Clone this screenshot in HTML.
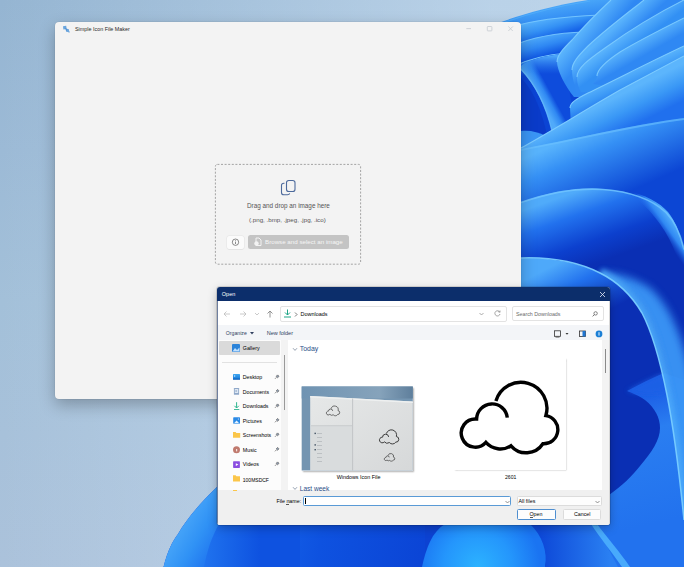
<!DOCTYPE html>
<html><head><meta charset="utf-8">
<style>
*{box-sizing:border-box;margin:0;padding:0}
html,body{width:684px;height:567px;overflow:hidden}
body{position:relative;font-family:"Liberation Sans",sans-serif;background:linear-gradient(to right,rgba(224,240,255,0) 0px,rgba(224,240,255,.49) 490px,rgba(224,240,255,.55) 684px),linear-gradient(to bottom,#95b5d2 0px,#9cbad6 150px,#a3c0d9 300px,#abc2db 567px)}
.a{position:absolute}
.t{position:absolute;white-space:nowrap;line-height:1}
svg.a{overflow:visible}
</style></head><body>
<svg class="a" id="wall" style="left:0;top:0" width="684" height="567" viewBox="0 0 684 567">
<defs>
<linearGradient id="gI_old" gradientUnits="userSpaceOnUse" x1="560" y1="140" x2="650" y2="215"><stop offset="0" stop-color="#4eaafa"/><stop offset="0.45" stop-color="#2a80f1"/><stop offset="1" stop-color="#0b44d2"/></linearGradient>
<linearGradient id="gJ_old" gradientUnits="userSpaceOnUse" x1="545" y1="200" x2="650" y2="265"><stop offset="0" stop-color="#3f9cf8"/><stop offset="0.45" stop-color="#1b68ea"/><stop offset="1" stop-color="#0a33bd"/></linearGradient>
<linearGradient id="gK_old" gradientUnits="userSpaceOnUse" x1="540" y1="262" x2="615" y2="320"><stop offset="0" stop-color="#3e9af7"/><stop offset="0.45" stop-color="#1a62e8"/><stop offset="1" stop-color="#0a2db0"/></linearGradient>
<linearGradient id="gL" gradientUnits="userSpaceOnUse" x1="655" y1="445" x2="640" y2="540"><stop offset="0" stop-color="#3b98f7"/><stop offset="0.25" stop-color="#2274ef"/><stop offset="1" stop-color="#1458e4"/></linearGradient>
<linearGradient id="gBlob" gradientUnits="userSpaceOnUse" x1="175" y1="520" x2="225" y2="550"><stop offset="0" stop-color="#4eabfa"/><stop offset="0.5" stop-color="#3092f5"/><stop offset="1" stop-color="#1a6cee"/></linearGradient>
<linearGradient id="gBot" gradientUnits="userSpaceOnUse" x1="220" y1="530" x2="420" y2="560"><stop offset="0" stop-color="#1a6eef"/><stop offset="0.5" stop-color="#0e52e0"/><stop offset="1" stop-color="#0b45d6"/></linearGradient>
<radialGradient id="gO" gradientUnits="userSpaceOnUse" cx="478" cy="566" r="62"><stop offset="0" stop-color="#2cb2ff"/><stop offset="0.55" stop-color="#2496fc"/><stop offset="1" stop-color="#1a74f2"/></radialGradient>
<linearGradient id="gI" gradientUnits="userSpaceOnUse" x1="570" y1="138" x2="600" y2="205"><stop offset="0" stop-color="#58b3fc"/><stop offset="0.3" stop-color="#3590f5"/><stop offset="1" stop-color="#0c46d4"/></linearGradient>
<linearGradient id="gJ" gradientUnits="userSpaceOnUse" x1="575" y1="192" x2="600" y2="262"><stop offset="0" stop-color="#50abfa"/><stop offset="0.3" stop-color="#2272ee"/><stop offset="0.7" stop-color="#0c40ce"/><stop offset="1" stop-color="#0a2fb4"/></linearGradient>
<linearGradient id="gK" gradientUnits="userSpaceOnUse" x1="560" y1="262" x2="590" y2="320"><stop offset="0" stop-color="#4ea9fa"/><stop offset="0.4" stop-color="#2272ee"/><stop offset="1" stop-color="#0a2fb4"/></linearGradient>
<linearGradient id="gRib" gradientUnits="userSpaceOnUse" x1="652" y1="340" x2="681" y2="331"><stop offset="0" stop-color="#5ab4fc"/><stop offset="0.45" stop-color="#3894f6"/><stop offset="0.8" stop-color="#1f68ea"/><stop offset="1" stop-color="#1a5ae2"/></linearGradient>
<linearGradient id="gP" gradientUnits="userSpaceOnUse" x1="645" y1="385" x2="652" y2="425"><stop offset="0" stop-color="#3088f3"/><stop offset="1" stop-color="#1550e0"/></linearGradient>
<linearGradient id="gQ" gradientUnits="userSpaceOnUse" x1="630" y1="460" x2="660" y2="540"><stop offset="0" stop-color="#2a80f2"/><stop offset="1" stop-color="#2474ef"/></linearGradient>
<linearGradient id="gBlobIn" gradientUnits="userSpaceOnUse" x1="205" y1="540" x2="260" y2="540"><stop offset="0" stop-color="#1f72ee"/><stop offset="1" stop-color="#0e52e0"/></linearGradient>
<linearGradient id="gBR1" gradientUnits="userSpaceOnUse" x1="540" y1="540" x2="610" y2="540"><stop offset="0" stop-color="#0d48d8"/><stop offset="1" stop-color="#2a80f2"/></linearGradient>
<linearGradient id="gBR2" gradientUnits="userSpaceOnUse" x1="620" y1="530" x2="684" y2="560"><stop offset="0" stop-color="#1c66ec"/><stop offset="0.5" stop-color="#2272ef"/><stop offset="1" stop-color="#1a60e8"/></linearGradient>
<linearGradient id="gBand0" gradientUnits="userSpaceOnUse" x1="545" y1="6" x2="548" y2="24"><stop offset="0" stop-color="#4aa8f9"/><stop offset="1" stop-color="#2f88f3"/></linearGradient>
<linearGradient id="gBand1" gradientUnits="userSpaceOnUse" x1="545" y1="19" x2="550" y2="37"><stop offset="0" stop-color="#52aefb"/><stop offset="0.5" stop-color="#3592f5"/><stop offset="1" stop-color="#1766e9"/></linearGradient>
<linearGradient id="gBand2" gradientUnits="userSpaceOnUse" x1="540" y1="36" x2="545" y2="56"><stop offset="0" stop-color="#4eaafa"/><stop offset="0.5" stop-color="#2f88f3"/><stop offset="1" stop-color="#0f56e2"/></linearGradient>
<linearGradient id="gBand3" gradientUnits="userSpaceOnUse" x1="535" y1="57" x2="537" y2="75"><stop offset="0" stop-color="#45a2f8"/><stop offset="0.4" stop-color="#2474ef"/><stop offset="1" stop-color="#0b44d4"/></linearGradient>
<linearGradient id="gFold" gradientUnits="userSpaceOnUse" x1="538" y1="95" x2="549" y2="89"><stop offset="0" stop-color="#50aafa"/><stop offset="0.55" stop-color="#3089f3"/><stop offset="1" stop-color="#0e4cdc"/></linearGradient>
<linearGradient id="gD1" gradientUnits="userSpaceOnUse" x1="580" y1="32" x2="596" y2="46"><stop offset="0" stop-color="#5ab4fc"/><stop offset="1" stop-color="#2f88f3"/></linearGradient>
<linearGradient id="gD2" gradientUnits="userSpaceOnUse" x1="600" y1="40" x2="611" y2="52"><stop offset="0" stop-color="#58b2fc"/><stop offset="1" stop-color="#3089f3"/></linearGradient>
<linearGradient id="gD3" gradientUnits="userSpaceOnUse" x1="610" y1="46" x2="619" y2="58"><stop offset="0" stop-color="#58b2fc"/><stop offset="1" stop-color="#3290f4"/></linearGradient>
<linearGradient id="gD4" gradientUnits="userSpaceOnUse" x1="625" y1="48" x2="633" y2="62"><stop offset="0" stop-color="#5ab4fc"/><stop offset="1" stop-color="#2f88f3"/></linearGradient>
<linearGradient id="gD5" gradientUnits="userSpaceOnUse" x1="630" y1="70" x2="640" y2="92"><stop offset="0" stop-color="#5ab4fc"/><stop offset="0.5" stop-color="#3b98f6"/><stop offset="1" stop-color="#1e6eed"/></linearGradient>
<linearGradient id="gH" gradientUnits="userSpaceOnUse" x1="590" y1="110" x2="605" y2="140"><stop offset="0" stop-color="#5cb5fc"/><stop offset="0.5" stop-color="#3a98f6"/><stop offset="1" stop-color="#2070ee"/></linearGradient>
<linearGradient id="gJR" gradientUnits="userSpaceOnUse" x1="678" y1="228" x2="664" y2="238"><stop offset="0" stop-color="#52aefb"/><stop offset="0.5" stop-color="#3088f3"/><stop offset="1" stop-color="#1a5ee6" stop-opacity="0"/></linearGradient>
<linearGradient id="gFoldTop" gradientUnits="userSpaceOnUse" x1="0" y1="56" x2="0" y2="74"><stop offset="0" stop-color="#4ca6f9"/><stop offset="1" stop-color="#2a7ff0" stop-opacity="0"/></linearGradient>
<filter id="fb6" x="-50%" y="-50%" width="200%" height="200%"><feGaussianBlur stdDeviation="6"/></filter>
<filter id="fb2" x="-50%" y="-50%" width="200%" height="200%"><feGaussianBlur stdDeviation="2.5"/></filter>
<linearGradient id="gPQ" gradientUnits="userSpaceOnUse" x1="640" y1="390" x2="670" y2="520"><stop offset="0" stop-color="#1a5ae4"/><stop offset="0.3" stop-color="#2a7ef1"/><stop offset="1" stop-color="#2272ee"/></linearGradient>
<filter id="fb4" x="-50%" y="-50%" width="200%" height="200%"><feGaussianBlur stdDeviation="4"/></filter>
</defs>
<!-- base -->
<path d="M504,25 C524,17.5 554,8.5 594,2 L684,2 L684,567 L163.5,567 C168,550 172,542 178,534 C186,520 200,503 217,487 L505,300 Z" fill="#0c42d2"/>
<!-- top bands -->
<path d="M500,22.5 C520,15 550,6 588,0 L684,0 L684,140 L505,140 Z" fill="url(#gBand0)"/>
<path d="M500,24 C520,16.5 550,7.5 590,1" fill="none" stroke="#5cb8fd" stroke-width="1.2" opacity="0.5"/>
<path d="M512,27 C530,21 555,17 600,15 L620,140 L512,140 Z" fill="url(#gBand1)"/>
<path d="M512,46 C528,39 550,33 585,32 L620,140 L512,140 Z" fill="url(#gBand2)"/>
<path d="M512,67 C526,60 542,55 568,53 L620,140 L512,140 Z" fill="url(#gBand3)"/>
<g fill="none" stroke="#78c8ff" stroke-width="1.1" opacity="0.9">
<path d="M512,27 C530,21 555,17 600,15"/><path d="M512,46 C528,39 550,33 585,32"/><path d="M512,67 C526,60 542,55 568,53"/>
</g>
<!-- dark lower-left region -->
<path d="M512,70 C528,82 540,100 548,140 L512,140 Z" fill="#0a3bc9"/>
<!-- fold F -->
<path d="M521,66 C530,59 545,56 562,54 L576,125 L552,131 C546,106 535,85 521,70 Z" fill="url(#gFold)"/>
<path d="M521,66 C530,59 545,56 562,54 L566,75 L521,75 Z" fill="url(#gFoldTop)"/>
<path d="M521,69 C536,85 546,106 552,131" fill="none" stroke="#66bcfd" stroke-width="1.2" opacity="0.8"/>
<!-- diagonal petals -->
<path d="M611,0 C598,12 585,25 572,40 C564,48 557,55 557,62 C557,70 565,86 574,97 L684,97 L684,0 Z" fill="url(#gD1)"/>
<path d="M644,0 C625,15 605,30 588,46 C578,56 572,63 572,70 C572,78 575,86 577,93 L684,97 L684,0 Z" fill="url(#gD2)"/>
<path d="M684,0 C660,12 630,30 605,48 C588,60 577,68 577,77 C577,84 579,88 581,92 L684,97 Z" fill="url(#gD3)"/>
<path d="M684,18 C668,26 640,40 620,52 C605,62 597,70 597,76 C597,80 594,82 593,84 L684,97 Z" fill="url(#gD4)"/>
<g fill="none" stroke="#7ccbff" stroke-width="1.1" opacity="0.95">
<path d="M611,0 C598,12 585,25 572,40 C564,48 557,55 557,62"/>
<path d="M644,0 C625,15 605,30 588,46 C578,56 572,63 572,70"/>
<path d="M684,0 C660,12 630,30 605,48 C588,60 577,68 577,77"/>
<path d="M684,18 C668,26 640,40 620,52 C605,62 597,70 597,76"/>
</g>
<path d="M684,46 C650,62 615,80 588,93 C576,99 570,103 570,108 L571,125 L684,125 Z" fill="url(#gD5)"/>
<path d="M684,46 C650,62 615,80 588,93 C576,99 570,103 570,108" fill="none" stroke="#7ccbff" stroke-width="1.1"/>
<!-- small petal G -->
<path d="M521,131 C530,130 538,132 546,136 L556,150 L521,150 Z" fill="#3a96f6"/>
<!-- petal H -->
<path d="M521,148 C550,132 585,110 620,90 L684,56 L684,160 L521,160 Z" fill="url(#gH)"/>
<path d="M521,148 C550,132 585,110 620,90 L684,56" fill="none" stroke="#7ccbff" stroke-width="1.1"/>
<!-- petal I -->
<path d="M521,149 C580,138 630,125 684,118 L684,250 L521,250 Z" fill="url(#gI)"/>
<path d="M521,150 C580,139 630,126 684,119" fill="none" stroke="#6cc2ff" stroke-width="2" opacity="0.6"/>
<!-- petal J -->
<path d="M521,202 C550,192 575,187 603,189 C630,191 652,199 666,212 C676,222 681,236 684,249 L684,567 L521,567 Z" fill="url(#gJ)"/>
<path d="M625,191 C645,194 660,203 668,212 C676,222 681,236 684,249 L684,285 C680,262 672,240 660,224 C650,210 640,200 625,191 Z" fill="url(#gJR)"/>
<path d="M521,202.5 C550,192.5 575,187.5 603,189.5 C630,191.5 652,199.5 666,212.5 C676,222.5 681,236.5 684,249.5" fill="none" stroke="#72c6ff" stroke-width="1.6" opacity="0.8"/>
<!-- petal K -->
<path d="M521,258 C550,257 578,262 600,273 C618,282 632,296 642,313 C652,332 660,360 667,395 C673,425 679,470 684,520 L684,567 L521,567 Z" fill="url(#gK)"/>
<!-- petal P+Q -->
<path d="M627,391 C640,384 652,378 664,373 L684,380 L684,567 L597,567 L597,524 L609,495 C622,486 632,476 640,466 C652,452 660,440 660,428 C660,418 655,408 645,400 C638,395 632,393 627,391 Z" fill="url(#gPQ)"/>
<path d="M627,391 C640,384 652,378 664,373 L666,392 C655,395 640,395 627,391 Z" fill="#1e62e6" filter="url(#fb2)" opacity="0.8"/>
<clipPath id="cRib"><path d="M521,258 C550,257 578,262 600,273 C618,282 632,296 642,313 C652,332 660,360 667,395 C673,425 679,470 684,520 L684,567 L700,567 L700,150 L521,150 Z"/></clipPath>
<g clip-path="url(#cRib)" fill="none">
<path d="M600,273 C618,282 632,296 642,313 C652,332 660,360 667,395 C673,425 679,470 684,520 L704,540 C704,470 698,420 692,380 C684,340 670,305 650,288 C635,278 615,272 600,273 Z" fill="#3b96f6" filter="url(#fb4)" opacity="0.95"/>
<path d="M600,273 C618,282 632,296 642,313 C652,332 660,360 667,395 C673,425 679,470 684,520 L690,600" stroke="#4eaafa" stroke-width="10" filter="url(#fb2)" opacity="0.9"/>
</g>
<path d="M521,258 C550,257 578,262 600,273 C618,282 632,296 642,313 C652,332 660,360 667,395 C673,425 679,470 684,520" fill="none" stroke="#78ccff" stroke-width="1.5" opacity="0.95"/>
<!-- bottom-right light petals -->
<!-- bottom -->
<path d="M218,500 L425,500 L425,567 L218,567 Z" fill="url(#gBot)"/>
<!-- blob N -->
<path d="M163.5,567 C168,550 172,542 178,534 C186,520 200,503 217,487 L230,478 L300,478 L300,567 Z" fill="url(#gBlob)"/>
<path d="M236,505 C222,515 210,535 204,567 L300,567 L300,505 Z" fill="url(#gBlobIn)"/>
<!-- petal O -->
<path d="M422,567 C426,548 432,532 445,524 L535,524 C545,540 548,555 545,567 Z" fill="url(#gO)"/>
<path d="M530,524 L595,524 C603,540 612,555 618,567 L545,567 C548,552 542,535 530,524 Z" fill="url(#gBR1)"/>
<path d="M591,524 C600,538 612,552 622,567 L630,567 C620,552 606,536 597,524 Z" fill="#4db0fd" opacity="0.9"/>

</svg>

<!-- ===== App window ===== -->
<div class="a" style="left:55px;top:22px;width:466px;height:377px;background:#f3f3f3;border-radius:4px;box-shadow:0 0 0 0.5px rgba(0,0,0,.08),0 6px 16px rgba(0,0,0,.26)"></div>
<svg class="a" style="left:62px;top:25px" width="9" height="9" viewBox="0 0 9 9">
  <path d="M1,1.2 L4.2,0.8 L4.6,4 L1.4,4.4 Z" fill="#6aa6de"/><path d="M3.2,3.2 L6.6,4.2 L7.6,7.6 L4.2,6.6 Z" fill="#3f86d0"/><path d="M4.6,4 L6.6,4.2 L7.6,7.6 L4.2,6.6 Z" fill="#8bbde8" opacity=".6"/>
</svg>
<div class="t" style="left:75px;top:27.2px;font-size:5.4px;color:#2a2a2a">Simple Icon File Maker</div>
<svg class="a" style="left:0;top:0" width="684" height="567" viewBox="0 0 684 567"><g fill="none" stroke="#c3c8cf" stroke-width="0.75"><path d="M466.3,28.6 L471,28.6"/><rect x="487.3" y="26.5" width="4.6" height="4.4" rx="0.6"/><path d="M508.3,26.5 L512.8,31 M512.8,26.5 L508.3,31"/></g></svg>



<!-- dashed drop area -->
<svg class="a" style="left:0;top:0" width="684" height="567" viewBox="0 0 684 567"><rect x="215.4" y="164.4" width="145.2" height="99.8" rx="2" fill="none" stroke="#8f8f8f" stroke-width="0.8" stroke-dasharray="2 1.6"/></svg>
<svg class="a" style="left:280px;top:179px" width="16" height="17" viewBox="0 0 16 17">
  <rect x="6.5" y="1.5" width="8.5" height="11" rx="2.3" fill="none" stroke="#4d6a9c" stroke-width="1.1"/>
  <path d="M4.5,4.3 L3.8,4.3 Q1.5,4.3 1.5,6.6 L1.5,13.5 Q1.5,15.8 3.8,15.8 L7.5,15.8 Q9.3,15.8 9.7,14.4" fill="none" stroke="#4d6a9c" stroke-width="1.1"/>
</svg>
<div class="t" style="left:247px;top:202.5px;font-size:6.35px;color:#555">Drag and drop an image here</div>
<div class="t" style="left:249px;top:216.5px;font-size:6.2px;color:#555">(.png, .bmp, .jpeg, .jpg, .ico)</div>
<div class="a" style="left:227px;top:236px;width:17px;height:13px;background:#fbfbfb;border-radius:2px;box-shadow:0 0 0 0.5px #e3e3e3,0 0.5px 0 #d8d8d8"></div>
<svg class="a" style="left:231px;top:237.5px" width="9" height="9" viewBox="0 0 9 9"><circle cx="4.5" cy="4.2" r="3.2" fill="none" stroke="#5a5a5a" stroke-width="0.7"/><path d="M4.5,3.6 L4.5,6" stroke="#5a5a5a" stroke-width="0.7"/><circle cx="4.5" cy="2.5" r="0.45" fill="#5a5a5a"/></svg>
<div class="a" style="left:248px;top:235px;width:101px;height:14px;background:#c4c4c4;border-radius:2.5px"></div>
<svg class="a" style="left:253px;top:237px" width="10" height="10" viewBox="0 0 10 10"><path d="M3,1 L6,1 L8,3 L8,8.5 L3,8.5 Z" fill="none" stroke="#f3f3f3" stroke-width="1"/><circle cx="3.5" cy="6.5" r="2.2" fill="#f3f3f3"/></svg>
<div class="t" style="left:265px;top:238.5px;font-size:6.2px;color:#f6f6f6">Browse and select an image</div>

<!-- ===== Open dialog ===== -->
<div class="a" style="left:217px;top:287.4px;width:392.6px;height:238.1px;background:#f0f0f0;border-radius:3px;box-shadow:0 0 0 1px rgba(0,0,0,.12),0 3px 10px rgba(0,0,0,.25);overflow:hidden">
  <div class="a" style="left:0;top:0;width:393px;height:14px;background:#0c2e6b"></div>
  <div class="a" style="left:0;top:13.5px;width:1px;height:225px;background:#6f7f9f"></div>
  <div class="a" style="left:391.6px;top:13.5px;width:1px;height:225px;background:#d8d8d8"></div>
  <div class="a" style="left:1px;top:13.5px;width:390.6px;height:25px;background:#ffffff"></div>
  <div class="a" style="left:1px;top:38px;width:390.6px;height:15px;background:#f3f5f8"></div>
  <div class="a" style="left:1px;top:53px;width:63px;height:150px;background:#fcfcfc"></div>
  <div class="a" style="left:64px;top:53px;width:7px;height:150px;background:#f3f3f3"></div>
  <div class="a" style="left:71px;top:53px;width:314px;height:150px;background:#ffffff"></div>
  <div class="a" style="left:385px;top:53px;width:6.6px;height:150px;background:#f3f3f3"></div>
  <div class="a" style="left:1px;top:203px;width:390.6px;height:35px;background:#f0f0f0"></div>
</div>
<div class="t" style="left:221.8px;top:291.8px;font-size:5.5px;color:#fff">Open</div>
<svg class="a" style="left:600px;top:291.5px" width="5" height="5" viewBox="0 0 5 5"><path d="M0,0 L5,5 M5,0 L0,5" stroke="#e8eef8" stroke-width="0.8"/></svg>

<!-- nav -->
<svg class="a" style="left:223px;top:310px" width="54" height="8" viewBox="0 0 54 8">
  <path d="M1,4 L7,4 M3.5,1.5 L1,4 L3.5,6.5" fill="none" stroke="#bdbdbd" stroke-width="0.8"/>
  <path d="M17,4 L23,4 M20.5,1.5 L23,4 L20.5,6.5" fill="none" stroke="#bdbdbd" stroke-width="0.8"/>
  <path d="M32,3 L34,5 L36,3" fill="none" stroke="#bdbdbd" stroke-width="0.8"/>
  <path d="M47,7.5 L47,1 M44.5,3.5 L47,1 L49.5,3.5" fill="none" stroke="#888" stroke-width="0.9"/>
</svg>
<div class="a" style="left:280px;top:306px;width:226.8px;height:15.5px;background:#fff;border:1px solid #e3e3e3;border-radius:2px"></div>
<svg class="a" style="left:283px;top:309px" width="9" height="9" viewBox="0 0 9 9"><path d="M4.5,0.5 L4.5,6 M2,3.5 L4.5,6 L7,3.5 M1,8 L8,8" fill="none" stroke="#1fa587" stroke-width="1"/></svg>
<svg class="a" style="left:294px;top:311.5px" width="4" height="5" viewBox="0 0 4 5"><path d="M1,0.5 L3,2.5 L1,4.5" fill="none" stroke="#444" stroke-width="0.7"/></svg>
<div class="t" style="left:300.5px;top:311.6px;font-size:5.46px;color:#000">Downloads</div>
<svg class="a" style="left:479px;top:312px" width="5" height="4" viewBox="0 0 5 4"><path d="M0.5,1 L2.5,3 L4.5,1" fill="none" stroke="#888" stroke-width="0.7"/></svg>
<svg class="a" style="left:494px;top:310px" width="7" height="7" viewBox="0 0 7 7"><path d="M5.8,2.2 A2.6,2.6 0 1 0 6,4" fill="none" stroke="#888" stroke-width="0.75"/><path d="M4.3,1.8 L6,2.2 L6,0.5" fill="none" stroke="#888" stroke-width="0.7"/></svg>
<div class="a" style="left:512.2px;top:306.3px;width:91.4px;height:15.2px;background:#fff;border:1px solid #e3e3e3;border-radius:2px"></div>
<div class="t" style="left:516px;top:311.8px;font-size:5.3px;color:#6a6a6a">Search Downloads</div>
<svg class="a" style="left:592px;top:310.5px" width="6" height="6" viewBox="0 0 6 6"><circle cx="3.6" cy="2.4" r="1.7" fill="none" stroke="#555" stroke-width="0.7"/><path d="M2.4,3.6 L0.6,5.4" stroke="#555" stroke-width="0.8"/></svg>

<!-- toolbar -->
<div class="t" style="left:225.8px;top:331.2px;font-size:5.2px;color:#2f3f5f">Organize</div>
<svg class="a" style="left:250px;top:332px" width="4" height="3" viewBox="0 0 4 3"><path d="M0,0 L4,0 L2,2.5 Z" fill="#2f3f5f"/></svg>
<div class="t" style="left:266.7px;top:331.2px;font-size:5.5px;color:#2f3f5f">New folder</div>
<svg class="a" style="left:554px;top:329.7px" width="50" height="8" viewBox="0 0 50 8">
  <rect x="0.5" y="0.8" width="6" height="5.5" fill="none" stroke="#333" stroke-width="0.8"/><path d="M1.5,7.2 L5.5,7.2" stroke="#333" stroke-width="0.6"/>
  <path d="M11.5,3 L14.5,3 L13,4.8 Z" fill="#333"/>
  <rect x="25.5" y="1" width="6" height="5.5" fill="none" stroke="#333" stroke-width="0.8"/><rect x="28.5" y="1" width="3" height="5.5" fill="#1e74d0"/>
  <circle cx="45" cy="3.9" r="3.4" fill="#1a7fd6"/><path d="M45,2.2 L45,5.6" stroke="#fff" stroke-width="0.9"/>
</svg>

<!-- sidebar -->
<div class="a" style="left:219px;top:341px;width:61px;height:14px;background:#dadada;border-radius:1px"></div>
<svg class="a" style="left:232px;top:344px" width="8" height="8" viewBox="0 0 8 8"><rect x="0" y="0" width="8" height="8" rx="1" fill="#2b83d9"/><path d="M0.5,7.5 L3,4 L5,6 L7.5,3.5 L7.5,7.5 Z" fill="#bfe0ff"/></svg>
<div class="t" style="left:242.8px;top:346.4px;font-size:5.3px;color:#000">Gallery</div>
<div class="a" style="left:222px;top:362px;width:55px;height:1px;background:#e2e2e2"></div>
<div class="a" style="left:284px;top:355px;width:1px;height:55px;background:#9a9a9a"></div>

<svg class="a" style="left:0;top:0" width="684" height="567" viewBox="0 0 684 567">
  <!-- Desktop -->
  <defs><linearGradient id="gDesk" x1="0" y1="0" x2="0" y2="1"><stop offset="0" stop-color="#3fa6f0"/><stop offset="1" stop-color="#1478d8"/></linearGradient></defs>
  <rect x="233" y="374" width="7" height="5.6" rx="0.5" fill="url(#gDesk)"/><rect x="233" y="378.6" width="7" height="1" fill="#0f5fb8"/><rect x="234" y="375" width="1.2" height="2" fill="#bfe3ff" opacity=".7"/>
  <!-- Documents -->
  <rect x="233.9" y="388" width="5.2" height="6.7" rx="0.5" fill="#8fa8c9"/><rect x="234.8" y="389" width="3.4" height="4" fill="#dfe8f3"/><rect x="235.6" y="390" width="1" height="2" fill="#8fa8c9"/>
  <!-- Downloads -->
  <path d="M236.6,402.2 L236.6,408 M234.4,405.8 L236.6,408 L238.8,405.8" fill="none" stroke="#2fb58f" stroke-width="1"/><rect x="234" y="409" width="5.3" height="0.9" fill="#2fb58f"/>
  <!-- Pictures -->
  <rect x="233.2" y="417.3" width="6.8" height="6.4" rx="0.6" fill="#2a8ae6"/><path d="M234,423.2 L236.6,420.6 L239.2,423.2 Z" fill="#e6f3ff"/><circle cx="238.4" cy="419" r="0.6" fill="#e6f3ff"/>
  <!-- Screenshots folder -->
  <path d="M233,432 L235.6,432 L236.4,432.9 L240.2,432.9 L240.2,437.8 L233,437.8 Z" fill="#fbc64a"/>
  <!-- Music -->
  <circle cx="236.5" cy="449.7" r="3.5" fill="#c07a6e"/><rect x="236" y="449" width="1.2" height="2.4" fill="#f5e3de"/>
  <!-- Videos -->
  <rect x="233.1" y="461.2" width="6.8" height="6.7" rx="0.6" fill="#8b4ee0"/><path d="M235.8,463.2 L238.4,464.6 L235.8,466 Z" fill="#fff"/>
  <!-- 100MSDCF folder -->
  <path d="M233,475.3 L235.6,475.3 L236.4,476.2 L240,476.2 L240,481.6 L233,481.6 Z" fill="#fbc64a"/>
  <rect x="233" y="490" width="4" height="1.2" fill="#fbc64a"/>
  <!-- pins -->
  <g stroke="#7a7a7a" stroke-width="0.9" fill="#8a9ab0">
    <path d="M275,378.8 L276.5,377.3"/><path d="M276.2,376.3 L277.6,374.9 L279,376.3 L277.6,377.7 Z"/>
    <path d="M275,393.3 L276.5,391.8"/><path d="M276.2,390.8 L277.6,389.4 L279,390.8 L277.6,392.2 Z"/>
    <path d="M275,407.8 L276.5,406.3"/><path d="M276.2,405.3 L277.6,403.9 L279,405.3 L277.6,406.7 Z"/>
    <path d="M275,422.3 L276.5,420.8"/><path d="M276.2,419.8 L277.6,418.4 L279,419.8 L277.6,421.2 Z"/>
    <path d="M275,436.8 L276.5,435.3"/><path d="M276.2,434.3 L277.6,432.9 L279,434.3 L277.6,435.7 Z"/>
    <path d="M275,451.3 L276.5,449.8"/><path d="M276.2,448.8 L277.6,447.4 L279,448.8 L277.6,450.2 Z"/>
    <path d="M275,465.8 L276.5,464.3"/><path d="M276.2,463.3 L277.6,461.9 L279,463.3 L277.6,464.7 Z"/>
  </g>
</svg>
<div class="t" style="left:242.8px;top:375.2px;font-size:5.3px;color:#000">Desktop</div>
<div class="t" style="left:242.8px;top:389.7px;font-size:5.2px;color:#000">Documents</div>
<div class="t" style="left:242.8px;top:404.2px;font-size:5.2px;color:#000">Downloads</div>
<div class="t" style="left:242.8px;top:418.7px;font-size:5.3px;color:#000">Pictures</div>
<div class="t" style="left:242.8px;top:433.2px;font-size:5.1px;color:#000">Screenshots</div>
<div class="t" style="left:242.8px;top:447.7px;font-size:5.3px;color:#000">Music</div>
<div class="t" style="left:242.8px;top:462.2px;font-size:5.3px;color:#000">Videos</div>
<div class="t" style="left:242.8px;top:477.6px;font-size:5.0px;color:#000">100MSDCF</div>


<!-- content -->
<svg class="a" style="left:292px;top:346.5px" width="6" height="5" viewBox="0 0 6 5"><path d="M1,1.2 L3,3.4 L5,1.2" fill="none" stroke="#6a7a90" stroke-width="0.7"/></svg>
<div class="t" style="left:299.8px;top:346px;font-size:6.9px;color:#2b4f88">Today</div>

<div class="a" style="left:301.7px;top:386.5px;width:111.1px;height:84px;box-shadow:1px 1px 1.5px rgba(0,0,0,.3)"></div>
<svg class="a" style="left:0;top:0" width="684" height="567" viewBox="0 0 684 567">
  <defs><linearGradient id="gScr" x1="0" y1="0" x2="1" y2="1"><stop offset="0" stop-color="#e6e8e8"/><stop offset="1" stop-color="#d6d8d9"/></linearGradient></defs>
  <defs><linearGradient id="gPhTop" x1="0" y1="0" x2="1" y2="0"><stop offset="0" stop-color="#6f93b2"/><stop offset="0.7" stop-color="#86a3bb"/><stop offset="1" stop-color="#5f7f9c"/></linearGradient></defs>
  <rect x="301.7" y="386.5" width="111.1" height="84" fill="#7495b1"/>
  <rect x="301.7" y="386.5" width="111.1" height="12" fill="url(#gPhTop)"/>
  <path d="M310.2,395.9 L412.8,401.5 L412.8,470.5 L310.2,470.5 Z" fill="url(#gScr)"/>
  <path d="M310.2,395.9 L412.8,401.5 L412.8,403 L310.2,397.5 Z" fill="#eef0f0"/>
  <path d="M495.9,401 A25.5,25.5 0 1 1 545.9,415.6 A14.2,14.2 0 0 1 542.9,443.8 A20,20 0 0 1 511,445.8 A19.4,19.4 0 0 1 485.9,442.4 A14.1,14.1 0 1 1 476.6,419 A15.4,15.4 0 0 1 507.3,417.6" transform="translate(378.9,429.8) scale(0.2) translate(-458.5,-382)" fill="none" stroke="#2a2a2a" stroke-width="4.5"/>
  <path d="M495.9,401 A25.5,25.5 0 1 1 545.9,415.6 A14.2,14.2 0 0 1 542.9,443.8 A20,20 0 0 1 511,445.8 A19.4,19.4 0 0 1 485.9,442.4 A14.1,14.1 0 1 1 476.6,419 A15.4,15.4 0 0 1 507.3,417.6" transform="translate(384,453.5) scale(0.108374) translate(-458.5,-382)" fill="none" stroke="#3a3a3a" stroke-width="6.45909"/>
  <path d="M495.9,401 A25.5,25.5 0 1 1 545.9,415.6 A14.2,14.2 0 0 1 542.9,443.8 A20,20 0 0 1 511,445.8 A19.4,19.4 0 0 1 485.9,442.4 A14.1,14.1 0 1 1 476.6,419 A15.4,15.4 0 0 1 507.3,417.6" transform="translate(326,406) scale(0.137931) translate(-458.5,-382)" fill="none" stroke="#3a3a3a" stroke-width="5.075"/>
  <rect x="352.3" y="398.5" width="0.8" height="72" fill="#b9bdbf"/>
  <rect x="311" y="426" width="41" height="44" fill="#d9dcdd"/>
  <rect x="311" y="425.5" width="41" height="0.6" fill="#b9bdbf"/>
  <g fill="#3f4f60"><rect x="314.5" y="432.7" width="1.4" height="1.4"/><rect x="314.5" y="444.2" width="1.4" height="1.4"/><rect x="314.5" y="449" width="1.4" height="1.4"/></g>
  <g fill="#b5babd"><rect x="317" y="433" width="5" height="0.8"/><rect x="317" y="437" width="5" height="0.8"/><rect x="317" y="441" width="5" height="0.8"/><rect x="317" y="445" width="5" height="0.8"/><rect x="317" y="449" width="5" height="0.8"/><rect x="317" y="453" width="5" height="0.8"/><rect x="317" y="457" width="5" height="0.8"/><rect x="317" y="461" width="5" height="0.8"/></g>
</svg>

<div class="a" style="left:454px;top:358.3px;width:111.6px;height:112px;background:#fff;box-shadow:0.5px 0.5px 1.5px rgba(0,0,0,.3)"></div>
<svg class="a" style="left:454px;top:358px" width="112" height="112" viewBox="454 358 112 112">
  <path d="M495.9,401 A25.5,25.5 0 1 1 545.9,415.6 A14.2,14.2 0 0 1 542.9,443.8 A20,20 0 0 1 511,445.8 A19.4,19.4 0 0 1 485.9,442.4 A14.1,14.1 0 1 1 476.6,419 A15.4,15.4 0 0 1 507.3,417.6" fill="none" stroke="#000" stroke-width="3.4" stroke-linejoin="miter"/>
</svg>
<div class="t" style="left:336.7px;top:475px;font-size:5.4px;color:#000">Windows Icon File</div>
<div class="t" style="left:505px;top:475px;font-size:5.1px;color:#000">2601</div>
<svg class="a" style="left:292px;top:485.5px" width="6" height="5" viewBox="0 0 6 5"><path d="M1,1.2 L3,3.4 L5,1.2" fill="none" stroke="#6a7a90" stroke-width="0.7"/></svg>
<div class="t" style="left:299.8px;top:485.5px;font-size:6.55px;color:#2b4f88">Last week</div>
<div class="a" style="left:605px;top:348.5px;width:1px;height:24px;background:#8a8a8a"></div>

<!-- footer -->
<div class="a" style="left:218px;top:491px;width:390.6px;height:34px;background:#f0f0f0;border-radius:0 0 3px 3px"></div>
<div class="t" style="left:276.4px;top:499px;font-size:5.3px;color:#000">File name:</div>
<div class="a" style="left:286.4px;top:504px;width:2.8px;height:0.5px;background:#555"></div>
<div class="a" style="left:303px;top:496px;width:208px;height:10px;background:#fff;border:1px solid #5a9ad6;border-radius:1.5px"></div>
<div class="a" style="left:305px;top:498px;width:0.7px;height:6px;background:#000"></div>
<svg class="a" style="left:504.5px;top:499.5px" width="5" height="4" viewBox="0 0 5 4"><path d="M0.5,1 L2.5,3 L4.5,1" fill="none" stroke="#666" stroke-width="0.7"/></svg>
<div class="a" style="left:516.5px;top:496px;width:85px;height:9.5px;background:#fdfdfd;border:1px solid #dcdcdc;border-radius:1.5px"></div>
<div class="t" style="left:518.5px;top:498.8px;font-size:5.3px;color:#000">All files</div>
<svg class="a" style="left:594.5px;top:499.5px" width="5" height="4" viewBox="0 0 5 4"><path d="M0.5,1 L2.5,3 L4.5,1" fill="none" stroke="#666" stroke-width="0.7"/></svg>
<div class="a" style="left:517px;top:509px;width:38.6px;height:10.5px;background:#fdfdfd;border:1px solid #4f8fd0;border-radius:1.5px"></div>
<div class="t" style="left:529.5px;top:512.3px;font-size:5.3px;color:#000">Open</div>
<div class="a" style="left:529.6px;top:517px;width:3.8px;height:0.5px;background:#555"></div>
<div class="a" style="left:562.5px;top:509px;width:38.5px;height:10.5px;background:#fdfdfd;border:1px solid #dcdcdc;border-radius:1.5px"></div>
<div class="t" style="left:574px;top:512.3px;font-size:5.3px;color:#000">Cancel</div>
</body></html>
